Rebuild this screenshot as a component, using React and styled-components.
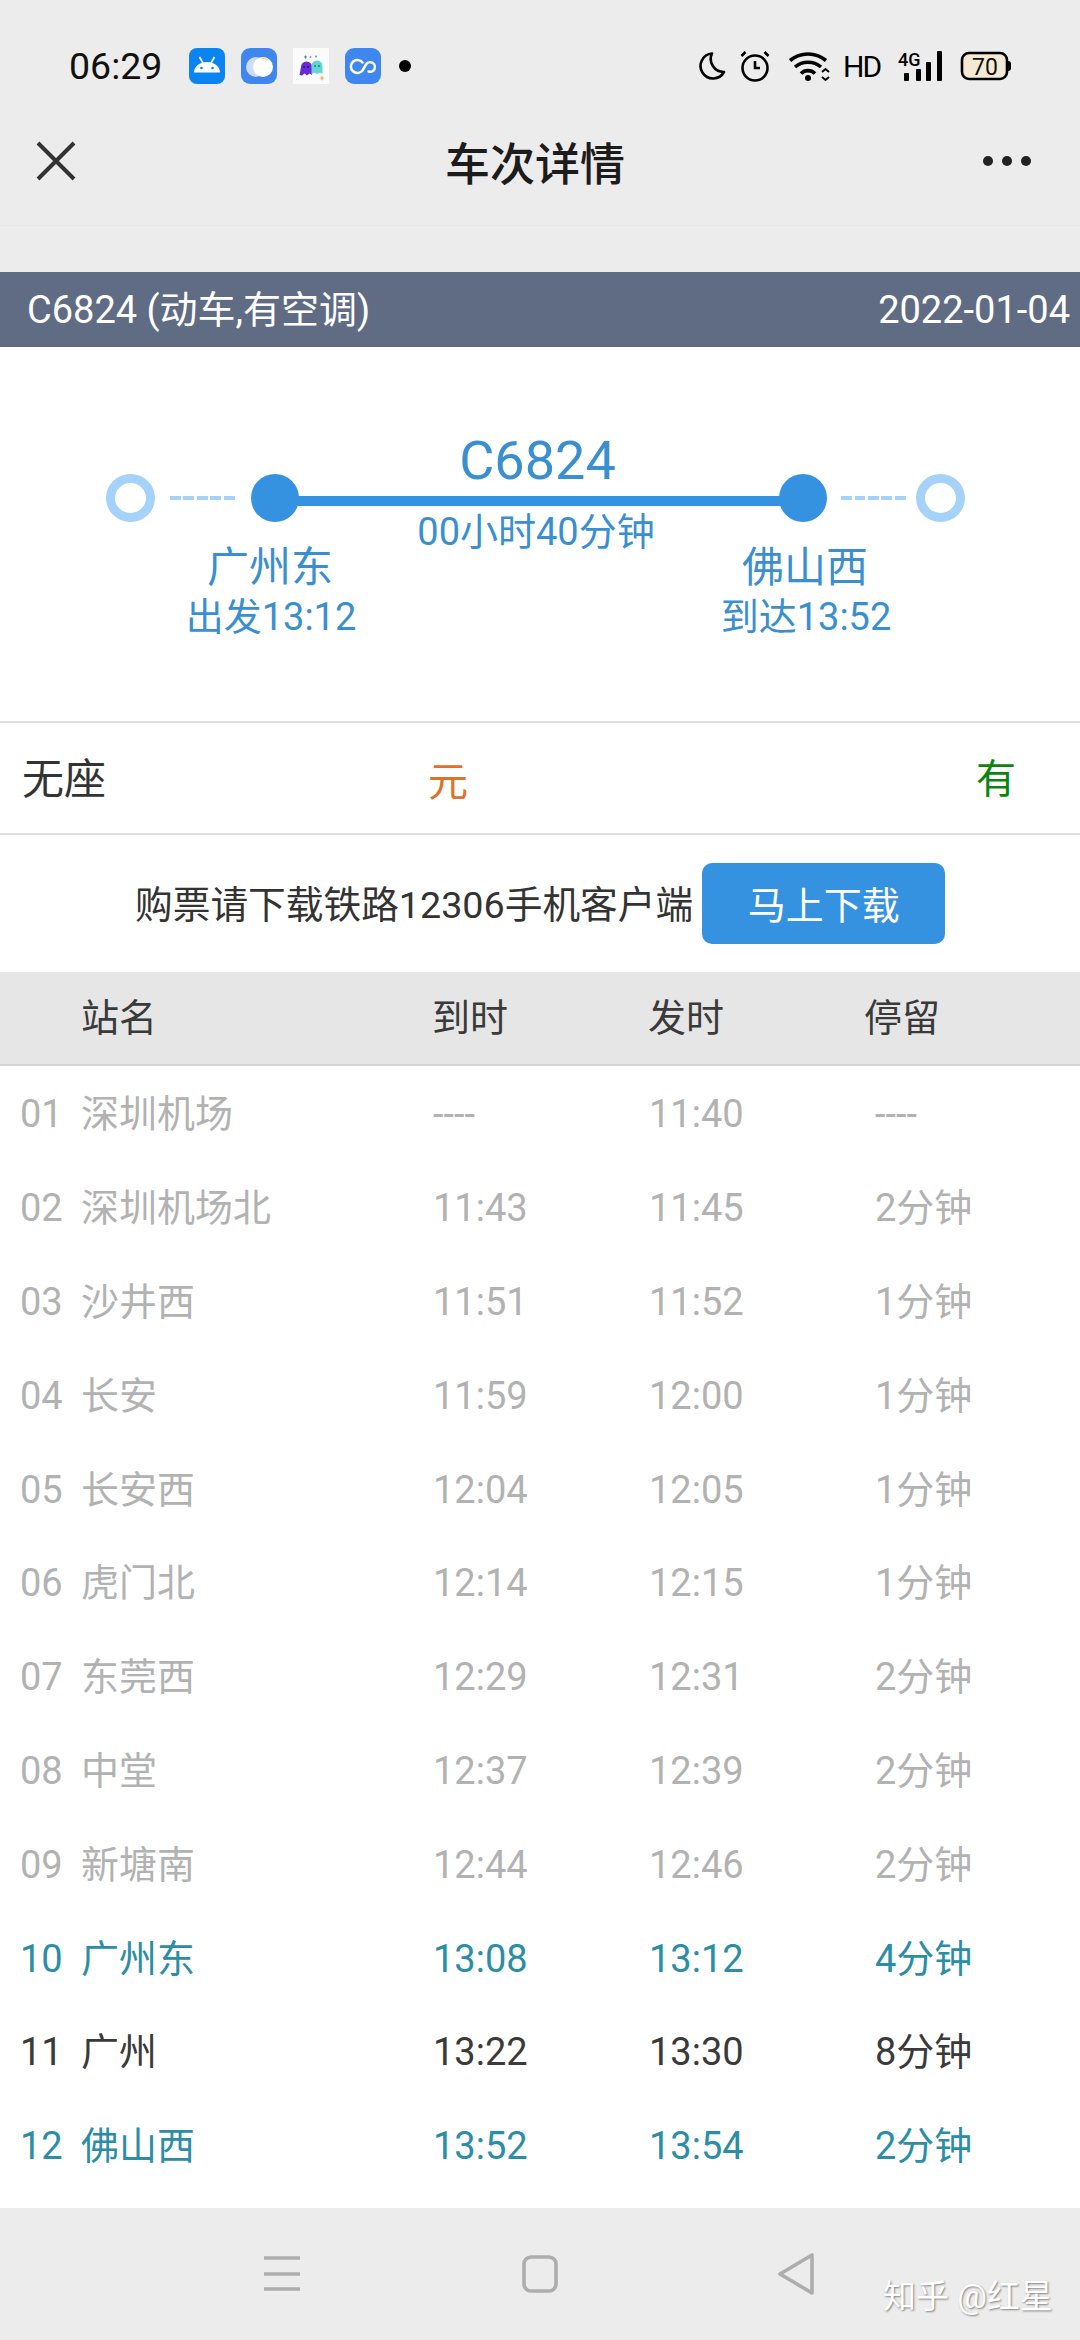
import React from "react";
import styled, { createGlobalStyle } from "styled-components";

const Global = createGlobalStyle`
  html, body { margin: 0; padding: 0; background: #fff; }
  body { font-family: Roboto, "Noto Sans CJK SC", sans-serif; }
`;
const Page = styled.div`width: 1080px; height: 2340px; display: flex; flex-direction: column; overflow: hidden; background: #fff;`;
const TopChrome = styled.div`background: #ececec; height: 272px; flex: none; display: flex; flex-direction: column;`;
const StatusBar = styled.div`height: 60px; padding: 36px 0 0 69px; display: flex; align-items: center; position: relative;`;
const Clock = styled.div`font-size: 37.5px; color: #111; width: 120px; line-height: 60px; white-space: nowrap;`;
const AppIcons = styled.div`display: flex; gap: 16px; align-items: center;`;
const Dot = styled.div`width: 12px; height: 12px; border-radius: 50%; background: #000; margin-left: 18px;`;
const StatusRight = styled.div`position: absolute; left: 699px; top: 50px; width: 315px; height: 34px;`;
const NavBar = styled.div`height: 130px; display: flex; align-items: center; justify-content: space-between; padding: 0 36px 0; border-bottom: 1px solid #e8e8e8; box-sizing: border-box; flex: none;`;
const Title = styled.div`font-size: 45px; color: #1c1c1c; font-weight: 500; margin-left: 12px; margin-top: 2px;`;
const Band = styled.div`height: 75px; flex: none; background: #5f6c84; color: #fff; display: flex; justify-content: space-between; align-items: center; padding: 0 10px 0 27px; box-sizing: border-box; font-size: 38px; line-height: 44px;`;
const Hero = styled.div`height: 376px; flex: none; box-sizing: border-box; border-bottom: 2px solid #dedede; padding: 127px 115px 0 106px; color: #3a8fd0;`;
const TrackRow = styled.div`height: 48px; display: flex; align-items: center;`;
const Ring = styled.div`width: 49px; height: 48px; border-radius: 50%; border: 9px solid #a5d2f8; box-sizing: border-box; flex: none;`;
const Dash = styled.div`width: 65px; height: 4px; margin: 0 ${p => p.$end ? "10px 0 14px" : "16px 0 15px"}; flex: none; background: repeating-linear-gradient(90deg, #a5d2f8 0 11px, transparent 11px 13.500px);`;
const Node = styled.div`width: 48px; height: 48px; border-radius: 50%; background: #3592e0; flex: none;`;
const Span = styled.div`flex: 1; position: relative; display: flex; justify-content: center; height: 48px;`;
const TrackLine = styled.div`position: absolute; left: -2px; right: -2px; top: 22px; height: 10px; background: #3592e0;`;
const TrainNo = styled.div`position: absolute; top: -43px; font-size: 54px; line-height: 60px; margin-left: -3px;`;
const Duration = styled.div`position: absolute; top: 36px; font-size: 38px; line-height: 44px; white-space: nowrap; margin-left: -6px;`;
const Labels = styled.div`display: grid; grid-template-columns: 240px 240px; column-gap: 295px; margin: 21px 0 0 44px;`;
const Station = styled.div`display: flex; flex-direction: column; align-items: center;`;
const StationName = styled.div`font-size: 42px; line-height: 50px;`;
const StationTime = styled.div`font-size: 38px; line-height: 44px; margin: 2px 0 0 2px; white-space: nowrap;`;
const SeatRow = styled.div`height: 112px; flex: none; box-sizing: border-box; border-bottom: 2px solid #dedede; display: grid; grid-template-columns: 406px 548px 1fr; padding: 0 0 5px 22px; align-items: center; font-size: 42px; color: #333;`;
const SeatPrice = styled.span`color: #e0702c; font-size: 40px; margin-top: 6px;`;
const SeatState = styled.span`color: #0b860b; font-size: 40px;`;
const Promo = styled.div`height: 137px; flex: none; display: flex; align-items: center; padding-left: 135px; font-size: 37.7px; color: #333; gap: 9px;`;
const PromoText = styled.span`margin-top: -4px; white-space: nowrap;`;
const DownloadBtn = styled.div`width: 243px; height: 81px; border-radius: 10px; background: #3592e0; color: #fff; font-size: 38px; display: flex; align-items: center; justify-content: center; padding-bottom: 3px; box-sizing: border-box; flex: none;`;
const TableHead = styled.div`height: 94px; flex: none; box-sizing: border-box; background: #e6e6e6; border-bottom: 2px solid #d4d4d4; font-size: 38px; color: #3a3a3a; display: grid; grid-template-columns: 351px 216px 216px 1fr; padding: 0 0 7px 81px; align-items: center;`;
const Rows = styled.div`flex: 1; display: flex; flex-direction: column; padding-top: 1.5px;`;
const Row = styled.div`height: 93.8px; flex: none; display: grid; grid-template-columns: 61px 352px 216px 226px 1fr; padding-left: 20px; align-items: center; font-size: 38px; line-height: 50px; white-space: nowrap; color: ${p => p.$c};`;
const BottomBar = styled.div`height: 132px; flex: none; background: #ececec; position: relative;`;
const SoftKey = styled.svg`position: absolute; left: ${p => p.$x}px; top: ${p => p.$y}px;`;
const Watermark = styled.div`position: absolute; left: 883px; top: 69px; font-size: 33px; line-height: 40px; color: #fff; text-shadow: 1px 1px 2px #808080; white-space: nowrap;`;

const GRAY = "#b2b2b2", TEAL = "#2b8da6", DARK = "#3a3a3a";
const data = [
  ["01","深圳机场","----","11:40","----",GRAY],
  ["02","深圳机场北","11:43","11:45","2分钟",GRAY],
  ["03","沙井西","11:51","11:52","1分钟",GRAY],
  ["04","长安","11:59","12:00","1分钟",GRAY],
  ["05","长安西","12:04","12:05","1分钟",GRAY],
  ["06","虎门北","12:14","12:15","1分钟",GRAY],
  ["07","东莞西","12:29","12:31","2分钟",GRAY],
  ["08","中堂","12:37","12:39","2分钟",GRAY],
  ["09","新塘南","12:44","12:46","2分钟",GRAY],
  ["10","广州东","13:08","13:12","4分钟",TEAL],
  ["11","广州","13:22","13:30","8分钟",DARK],
  ["12","佛山西","13:52","13:54","2分钟",TEAL],
];

const AndroidIcon = () => (
  <svg width="36" height="36" viewBox="0 0 36 36">
    <rect width="36" height="36" rx="8" fill="#0a84f0"/>
    <path d="M5 24.500a13 10.500 0 0 1 26 0z" fill="#fff"/>
    <path d="M10.500 9l3.500 6M25.500 9l-3.500 6" stroke="#fff" strokeWidth="1.6"/>
    <circle cx="12.500" cy="20" r="1.3" fill="#0a84f0"/><circle cx="23.500" cy="20" r="1.3" fill="#0a84f0"/>
  </svg>
);
const WeatherIcon = () => (
  <svg width="36" height="36" viewBox="0 0 36 36">
    <rect width="36" height="36" rx="9" fill="#3f86ee"/>
    <circle cx="15" cy="19" r="10" fill="#cfdcf6"/>
    <circle cx="22" cy="19" r="10" fill="#fff"/>
    <path d="M19 10a8 8 0 0 1 10 3z" fill="#f6e27a"/>
  </svg>
);
const GhostIcon = () => (
  <svg width="36" height="36" viewBox="0 0 36 36">
    <rect width="36" height="36" fill="#fbfbfb"/>
    <path d="M6.500 27l1.500-8a5.500 5.500 0 0 1 11 0v8l-2.500-1.500-2.500 2-2.500-2-2.500 2z" fill="#6a2bd4"/>
    <path d="M18.500 26v-8a5.500 5.500 0 0 1 11 0v8l-2.500-1.500-3 1.500-2.500-1.500z" fill="#5fd6d2"/>
    <circle cx="11" cy="19" r="1" fill="#2a1070"/><circle cx="15" cy="19" r="1" fill="#2a1070"/>
    <circle cx="22" cy="18" r="1" fill="#1e7f7c"/><circle cx="26" cy="18" r="1" fill="#1e7f7c"/>
    <path d="M11 9h3M12.500 7.500v3" stroke="#2a9d8f" strokeWidth="1"/>
    <circle cx="17.500" cy="9" r="0.900" fill="#e86a6a"/><circle cx="23" cy="8.500" r="0.900" fill="#2a9d8f"/>
    <path d="M29 27l1 2.500 2 .5-2 .5-1 2.500-1-2.500-2-.5 2-.5z" fill="#e9b93c"/>
  </svg>
);
const LoopIcon = () => (
  <svg width="36" height="36" viewBox="0 0 36 36">
    <rect width="36" height="36" rx="9" fill="#3f86ee"/>
    <path d="M17.500 14.500a6.500 6.500 0 1 0 0 8l3.500-6a4.800 4.800 0 1 1 2.500 7" fill="none" stroke="#fff" strokeWidth="2.500" strokeLinecap="round"/>
  </svg>
);
const StatusIcons = () => (
  <svg width="315" height="34" viewBox="699 50 315 34">
    <path d="M712 53.500a12.500 12.500 0 1 0 12 18.500a13 13 0 0 1-12-18.500z" fill="none" stroke="#000" strokeWidth="2.600" strokeLinejoin="round"/>
    <circle cx="755" cy="68" r="12.500" fill="none" stroke="#000" strokeWidth="2.600"/>
    <path d="M755 61v7h5M741.500 56l4-4M768.500 56l-4-4" fill="none" stroke="#000" strokeWidth="2.600"/>
    <path d="M790 60.500a28 28 0 0 1 36 0M795 67a20 20 0 0 1 26 0M801 73.500a10 10 0 0 1 14 0" fill="none" stroke="#000" strokeWidth="3.600"/>
    <circle cx="808" cy="78" r="3" fill="#000"/>
    <path d="M822 72l3.500-3 3.500 3M822 77l3.500 3 3.500-3" fill="none" stroke="#000" strokeWidth="2"/>
    <text x="843" y="77" fontFamily="Roboto, sans-serif" fontSize="30" letterSpacing="-2" fill="#000">HD</text>
    <text x="898" y="66" fontFamily="Roboto, sans-serif" fontSize="18" fontWeight="500" fill="#000">4G</text>
    <rect x="904" y="73" width="5" height="8" rx="1" fill="#000"/>
    <rect x="916" y="69" width="5" height="12" rx="1" fill="#000"/>
    <rect x="926" y="62" width="5" height="19" rx="1" fill="#000"/>
    <rect x="937" y="51" width="5" height="30" rx="1" fill="#000"/>
    <rect x="962" y="53" width="45" height="26" rx="7" fill="#f4ead4" stroke="#000" strokeWidth="2.600"/>
    <path d="M1008 61h1a3 3 0 0 1 2 3v4a3 3 0 0 1-2 3h-1z" fill="#000"/>
    <text x="972" y="75" fontFamily="Roboto, sans-serif" fontSize="23" fill="#111">70</text>
  </svg>
);

export default function App() {
  return (
    <Page>
      <Global />
      <TopChrome>
        <StatusBar>
          <Clock>06:29</Clock>
          <AppIcons><AndroidIcon/><WeatherIcon/><GhostIcon/><LoopIcon/></AppIcons>
          <Dot/>
          <StatusRight><StatusIcons/></StatusRight>
        </StatusBar>
        <NavBar>
          <svg width="40" height="40" viewBox="0 0 40 40"><path d="M2 2l36 36M38 2L2 38" stroke="#333" strokeWidth="4"/></svg>
          <Title>车次详情</Title>
          <svg width="52" height="12" viewBox="0 0 52 12" style={{marginRight: 10}}><circle cx="6" cy="6" r="5" fill="#222"/><circle cx="25" cy="6" r="5" fill="#222"/><circle cx="44" cy="6" r="5" fill="#222"/></svg>
        </NavBar>
      </TopChrome>
      <Band><span>C6824 (动车,有空调)</span><span>2022-01-04</span></Band>
      <Hero>
        <TrackRow>
          <Ring/><Dash/><Node/>
          <Span>
            <TrackLine/>
            <TrainNo>C6824</TrainNo>
            <Duration>00小时40分钟</Duration>
          </Span>
          <Node/><Dash $end/><Ring/>
        </TrackRow>
        <Labels>
          <Station><StationName>广州东</StationName><StationTime>出发13:12</StationTime></Station>
          <Station><StationName>佛山西</StationName><StationTime>到达13:52</StationTime></Station>
        </Labels>
      </Hero>
      <SeatRow><span>无座</span><SeatPrice>元</SeatPrice><SeatState>有</SeatState></SeatRow>
      <Promo><PromoText>购票请下载铁路12306手机客户端</PromoText><DownloadBtn>马上下载</DownloadBtn></Promo>
      <TableHead>
        <span>站名</span><span>到时</span><span>发时</span><span>停留</span>
      </TableHead>
      <Rows>
        {data.map((r) => (
          <Row key={r[0]} $c={r[5]}>
            <span>{r[0]}</span><span>{r[1]}</span><span>{r[2]}</span><span>{r[3]}</span><span>{r[4]}</span>
          </Row>
        ))}
      </Rows>
      <BottomBar>
        <SoftKey $x={264} $y={48} width="36" height="36" viewBox="0 0 36 36"><path d="M0 2h36M0 18h36M0 33h36" stroke="#adadad" strokeWidth="3.600"/></SoftKey>
        <SoftKey $x={522} $y={47} width="36" height="38" viewBox="0 0 36 38"><rect x="2" y="2" width="32" height="34" rx="7" fill="none" stroke="#adadad" strokeWidth="3.600"/></SoftKey>
        <SoftKey $x={776} $y={44} width="40" height="44" viewBox="0 0 40 44"><path d="M36 3v38L4 22z" fill="none" stroke="#adadad" strokeWidth="3.600" strokeLinejoin="round"/></SoftKey>
        <Watermark>知乎 @红星</Watermark>
      </BottomBar>
    </Page>
  );
}
